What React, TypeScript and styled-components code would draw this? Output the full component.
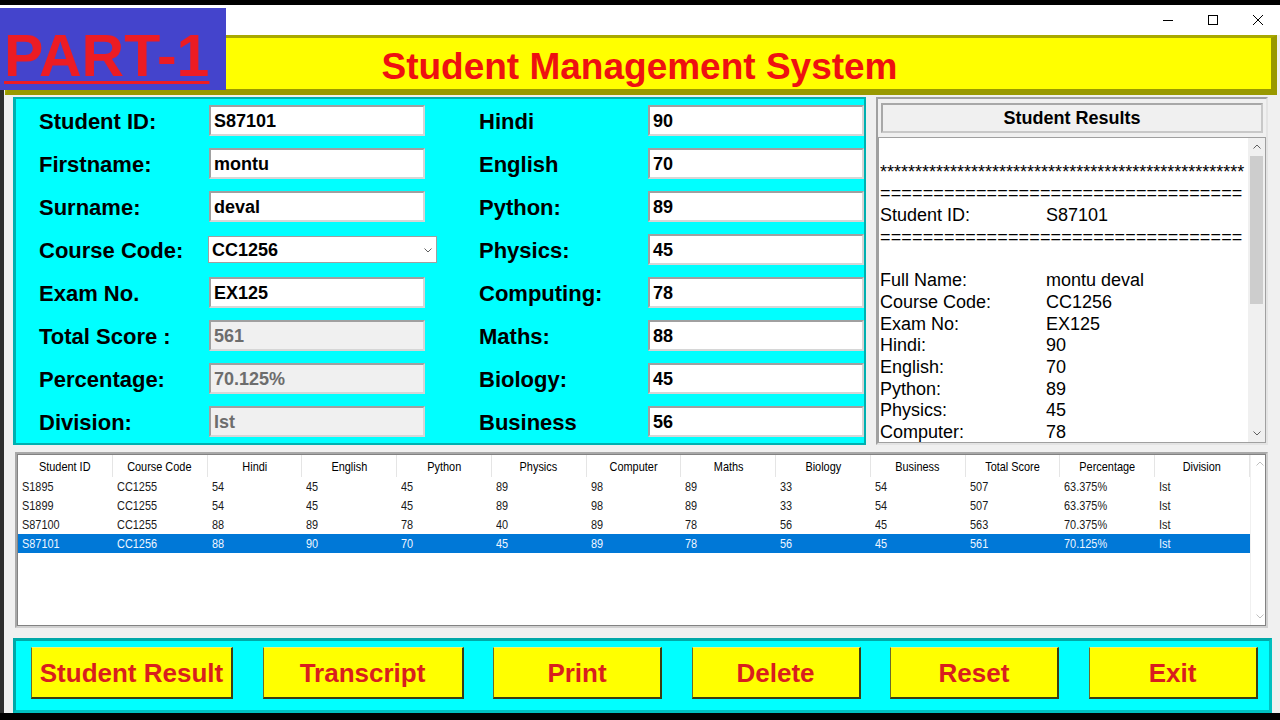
import React from 'react';
import styled, { createGlobalStyle } from 'styled-components';

const GlobalStyle = createGlobalStyle`
  html, body { margin: 0; padding: 0; background: #000; }
  body { font-family: "Liberation Sans", Arial, sans-serif; }
  * { box-sizing: border-box; }
`;

const Screen = styled.div`
  position: relative;
  width: 1280px;
  height: 720px;
  background: #000;
  padding: 5px 0 7px 0;
  display: flex;
  flex-direction: column;
  overflow: hidden;
`;

const TitleBar = styled.div`
  height: 30px;
  flex: none;
  background: #fff;
  display: flex;
  justify-content: flex-end;
  align-items: center;
`;

const WinButton = styled.div`
  width: 45px;
  height: 30px;
  display: flex;
  align-items: center;
  justify-content: center;
`;

const Badge = styled.div`
  position: absolute;
  left: 0;
  top: 8px;
  width: 226px;
  height: 82px;
  background: #4444cc;
  color: #ec1c24;
  font-family: "Liberation Sans", Arial, sans-serif;
  font-weight: 700;
  font-size: 59px;
  line-height: 1;
  padding: 19px 0 0 4px;
  text-decoration: underline;
  text-decoration-thickness: 3px;
  text-underline-offset: 5px;
  white-space: nowrap;
`;

const Body = styled.div`
  flex: 1;
  background: #f0f0f0;
  border-left: 4px solid #2e2e2e;
  display: flex;
  flex-direction: column;
`;

const TitleFrame = styled.div`
  height: 60px;
  flex: none;
  margin: 0 3px 0 1px;
  background: #ffff00;
  border-style: solid;
  border-width: 3px 6px 6px 3px;
  border-color: #a8a800 #999900 #999900 #a8a800;
  display: flex;
  align-items: center;
  justify-content: center;
  padding-top: 6px;
`;

const Title = styled.h1`
  margin: 0;
  font-family: "Liberation Sans", Arial, sans-serif;
  font-weight: 700;
  font-size: 37px;
  color: #ee1111;
  line-height: 1;
`;

const MidRow = styled.div`
  display: flex;
  margin-top: 2px;
  height: 348px;
  flex: none;
`;

const FormPanel = styled.div`
  margin-left: 9px;
  width: 853px;
  background: #00ffff;
  border-style: solid;
  border-width: 2px 2px 2px 3px;
  border-color: #00b0b0;
  display: grid;
  grid-template-columns: 170px 270px 169px 216px;
  grid-auto-rows: 43px;
  align-items: center;
  padding-left: 23px;
`;

const Label = styled.div`
  font-family: "Liberation Sans", Arial, sans-serif;
  font-weight: 700;
  font-size: 22px;
  color: #000;
  white-space: nowrap;
  padding-top: 2px;
`;

const Field = styled.div<{ $ro?: boolean }>`
  width: 216px;
  height: 31px;
  background: ${(p) => (p.$ro ? '#f0f0f0' : '#fff')};
  color: ${(p) => (p.$ro ? '#6d6d6d' : '#000')};
  border: 2px solid;
  border-color: #a0a0a0 #d6d6d6 #d6d6d6 #a0a0a0;
  font-family: "Liberation Sans", Arial, sans-serif;
  font-weight: 700;
  font-size: 18px;
  line-height: 28px;
  padding-left: 3px;
  white-space: nowrap;
`;

const Combo = styled.div`
  width: 229px;
  height: 27px;
  margin-left: -1px;
  background: #fff;
  border: 1px solid #a0a0a0;
  display: flex;
  align-items: center;
  justify-content: space-between;
  padding: 1px 4px 0 3px;
  font-family: "Liberation Sans", Arial, sans-serif;
  font-weight: 700;
  font-size: 18px;
`;

const ResultsPanel = styled.div`
  margin-left: 10px;
  width: 392px;
  border: 2px solid;
  border-color: #a0a0a0 #e4e4e4 #e4e4e4 #a0a0a0;
  padding: 4px 3px 0 3px;
  display: flex;
  flex-direction: column;
`;

const ResultsHeading = styled.div`
  height: 30px;
  flex: none;
  background: #f0f0f0;
  border: 2px solid;
  border-color: #a8a8a8 #c8c8c8 #c8c8c8 #a8a8a8;
  display: flex;
  align-items: center;
  justify-content: center;
  font-family: "Liberation Sans", Arial, sans-serif;
  font-weight: 700;
  font-size: 18px;
  color: #000;
`;

const TextArea = styled.div`
  margin: 4px -3px 0 -3px;
  flex: 1;
  background: #fff;
  border: 1px solid #a0a0a0;
  display: flex;
  overflow: hidden;
`;

const TextContent = styled.div`
  flex: 1;
  padding: 2px 0 0 1px;
  overflow: hidden;
  font-family: "Liberation Sans", Arial, sans-serif;
  font-size: 18px;
  line-height: 21.7px;
  color: #000;
`;

const TextLine = styled.div<{ $spaced?: boolean }>`
  display: flex;
  height: 21.7px;
  white-space: nowrap;
  overflow: hidden;
  letter-spacing: ${(p) => (p.$spaced ? '0.15px' : 'normal')};
`;

const TextKey = styled.span`
  width: 166px;
  flex: none;
`;

const VScroll = styled.div`
  width: 17px;
  flex: none;
  background: #f0f0f0;
  display: flex;
  flex-direction: column;
  align-items: center;
`;

const ScrollArrow = styled.div`
  height: 17px;
  width: 17px;
  display: flex;
  align-items: center;
  justify-content: center;
  flex: none;
`;

const ScrollTrack = styled.div`
  flex: 1;
  width: 100%;
  padding: 1px 2px;
`;

const Thumb = styled.div`
  height: 148px;
  background: #cdcdcd;
`;

const TableFrame = styled.div`
  margin: 7px 0 0 11px;
  width: 1253px;
  height: 176px;
  flex: none;
  border: 2px solid;
  border-color: #a8a8a8 #d0d0d0 #d0d0d0 #a8a8a8;
  display: flex;
`;

const TreeBox = styled.div`
  flex: 1;
  border: 1px solid #828282;
  background: #fff;
  display: flex;
  overflow: hidden;
`;

const TreeBody = styled.div`
  width: 1232px;
  flex: none;
`;

const TreeRow = styled.div<{ $head?: boolean; $sel?: boolean }>`
  display: grid;
  grid-template-columns: repeat(13, 1fr);
  height: ${(p) => (p.$head ? '22px' : '19px')};
  background: ${(p) => (p.$sel ? '#0078d7' : '#fff')};
  color: ${(p) => (p.$sel ? '#eef5ff' : p.$head ? '#000' : '#1a1a1a')};
  font-family: "Liberation Sans", Arial, sans-serif;
  font-size: 13px;
`;

const Cell = styled.div<{ $head?: boolean }>`
  display: flex;
  align-items: center;
  justify-content: ${(p) => (p.$head ? 'center' : 'flex-start')};
  padding-left: ${(p) => (p.$head ? '0' : '4px')};
  border-right: ${(p) => (p.$head ? '1px solid #e5e5e5' : 'none')};
  white-space: nowrap;
  overflow: hidden;
`;

const CellText = styled.span<{ $head?: boolean }>`
  display: inline-block;
  transform: scaleX(0.84);
  transform-origin: ${(p) => (p.$head ? 'center' : 'left')};
`;

const TreeScroll = styled.div`
  flex: 1;
  background: #fff;
  border-left: 1px solid #f0f0f0;
  display: flex;
  flex-direction: column;
  justify-content: space-between;
`;

const ButtonBar = styled.div`
  margin: 10px 0 0 9px;
  width: 1259px;
  height: 75px;
  flex: none;
  background: #00ffff;
  border: 3px solid;
  border-color: #00a8a8 #00c0c0 #00c0c0 #00a8a8;
  display: flex;
  align-items: flex-start;
  gap: 29.5px;
  padding: 6px 0 0 15px;
`;

const ActionButton = styled.button<{ $w: number }>`
  width: ${(p) => p.$w}px;
  height: 52px;
  flex: none;
  background: #ffff00;
  border-style: solid;
  border-width: 1px 2px 2px 1px;
  border-color: #f0f070 #3c3c14 #3c3c14 #6b6b2a;
  color: #d81e1e;
  font-family: "Liberation Sans", Arial, sans-serif;
  font-weight: 700;
  font-size: 26px;
  padding: 2px 0 0 0;
  cursor: pointer;
`;

const leftFields: [string, string, 'text' | 'combo' | 'ro'][] = [
  ['Student ID:', 'S87101', 'text'],
  ['Firstname:', 'montu', 'text'],
  ['Surname:', 'deval', 'text'],
  ['Course Code:', 'CC1256', 'combo'],
  ['Exam No.', 'EX125', 'text'],
  ['Total Score :', '561', 'ro'],
  ['Percentage:', '70.125%', 'ro'],
  ['Division:', 'Ist', 'ro'],
];

const rightFields: [string, string][] = [
  ['Hindi', '90'],
  ['English', '70'],
  ['Python:', '89'],
  ['Physics:', '45'],
  ['Computing:', '78'],
  ['Maths:', '88'],
  ['Biology:', '45'],
  ['Business', '56'],
];

const headers = [
  'Student ID', 'Course Code', 'Hindi', 'English', 'Python', 'Physics', 'Computer',
  'Maths', 'Biology', 'Business', 'Total Score', 'Percentage', 'Division',
];

const rows = [
  ['S1895', 'CC1255', '54', '45', '45', '89', '98', '89', '33', '54', '507', '63.375%', 'Ist'],
  ['S1899', 'CC1255', '54', '45', '45', '89', '98', '89', '33', '54', '507', '63.375%', 'Ist'],
  ['S87100', 'CC1255', '88', '89', '78', '40', '89', '78', '56', '45', '563', '70.375%', 'Ist'],
  ['S87101', 'CC1256', '88', '90', '70', '45', '89', '78', '56', '45', '561', '70.125%', 'Ist'],
];

const resultPairs: [string, string][] = [
  ['Full Name:', 'montu deval'],
  ['Course Code:', 'CC1256'],
  ['Exam No:', 'EX125'],
  ['Hindi:', '90'],
  ['English:', '70'],
  ['Python:', '89'],
  ['Physics:', '45'],
  ['Computer:', '78'],
];

const buttons: [string, number][] = [
  ['Student Result', 202],
  ['Transcript', 201],
  ['Print', 169],
  ['Delete', 169],
  ['Reset', 169],
  ['Exit', 169],
];

const Chevron = ({ up, color = '#606060' }: { up?: boolean; color?: string }) => (
  <svg width="8" height="5" viewBox="0 0 8 5">
    <path d={up ? 'M0.5 4.5 L4 1 L7.5 4.5' : 'M0.5 0.5 L4 4 L7.5 0.5'} fill="none" stroke={color} strokeWidth="1" />
  </svg>
);

export default function App() {
  return (
    <>
      <GlobalStyle />
      <Screen>
        <TitleBar>
          <WinButton>
            <svg width="10" height="10" viewBox="0 0 10 10">
              <path d="M0 5.5 H10" stroke="#000" strokeWidth="1" />
            </svg>
          </WinButton>
          <WinButton>
            <svg width="10" height="10" viewBox="0 0 10 10">
              <rect x="0.5" y="0.5" width="9" height="9" fill="none" stroke="#000" strokeWidth="1" />
            </svg>
          </WinButton>
          <WinButton>
            <svg width="10" height="10" viewBox="0 0 10 10">
              <path d="M0 0 L10 10 M10 0 L0 10" stroke="#000" strokeWidth="1" />
            </svg>
          </WinButton>
        </TitleBar>
        <Body>
          <TitleFrame>
            <Title>Student Management System</Title>
          </TitleFrame>
          <MidRow>
            <FormPanel>
              {leftFields.map(([label, value, kind], i) => (
                <React.Fragment key={label}>
                  <Label>{label}</Label>
                  <div>
                    {kind === 'combo' ? (
                      <Combo>
                        {value}
                        <Chevron />
                      </Combo>
                    ) : (
                      <Field $ro={kind === 'ro'}>{value}</Field>
                    )}
                  </div>
                  <Label>{rightFields[i][0]}</Label>
                  <Field>{rightFields[i][1]}</Field>
                </React.Fragment>
              ))}
            </FormPanel>
            <ResultsPanel>
              <ResultsHeading>Student Results</ResultsHeading>
              <TextArea>
                <TextContent>
                  <TextLine />
                  <TextLine>{'*'.repeat(52)}</TextLine>
                  <TextLine $spaced>{'='.repeat(34)}</TextLine>
                  <TextLine>
                    <TextKey>Student ID:</TextKey>
                    <span>S87101</span>
                  </TextLine>
                  <TextLine $spaced>{'='.repeat(34)}</TextLine>
                  <TextLine />
                  {resultPairs.map(([k, v]) => (
                    <TextLine key={k}>
                      <TextKey>{k}</TextKey>
                      <span>{v}</span>
                    </TextLine>
                  ))}
                </TextContent>
                <VScroll>
                  <ScrollArrow>
                    <Chevron up />
                  </ScrollArrow>
                  <ScrollTrack>
                    <Thumb />
                  </ScrollTrack>
                  <ScrollArrow>
                    <Chevron />
                  </ScrollArrow>
                </VScroll>
              </TextArea>
            </ResultsPanel>
          </MidRow>
          <TableFrame>
            <TreeBox>
              <TreeBody>
                <TreeRow $head>
                  {headers.map((h) => (
                    <Cell $head key={h}>
                      <CellText $head>{h}</CellText>
                    </Cell>
                  ))}
                </TreeRow>
                {rows.map((r, i) => (
                  <TreeRow key={r[0]} $sel={i === 3}>
                    {r.map((c, j) => (
                      <Cell key={j}>
                        <CellText>{c}</CellText>
                      </Cell>
                    ))}
                  </TreeRow>
                ))}
              </TreeBody>
              <TreeScroll>
                <ScrollArrow>
                  <Chevron up color="#c0c0c0" />
                </ScrollArrow>
                <ScrollArrow>
                  <Chevron color="#c0c0c0" />
                </ScrollArrow>
              </TreeScroll>
            </TreeBox>
          </TableFrame>
          <ButtonBar>
            {buttons.map(([t, w]) => (
              <ActionButton key={t} $w={w}>
                {t}
              </ActionButton>
            ))}
          </ButtonBar>
        </Body>
        <Badge>PART-1</Badge>
      </Screen>
    </>
  );
}
